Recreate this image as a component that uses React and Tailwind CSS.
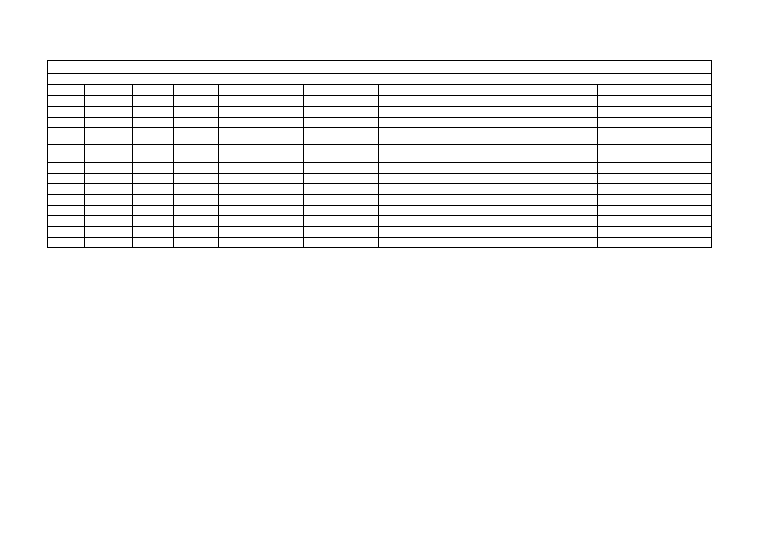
const cols = ["w-[37px]", "w-[48px]", "w-[41px]", "w-[45px]", "w-[85px]", "w-[75px]", "w-[219px]", "w-[114px]"];
const rows = [
  "h-[11px]", "h-[11px]", "h-[11px]", "h-[11px]", "h-[10px]", "h-[17px]", "h-[18px]", "h-[11px]",
  "h-[10px]", "h-[11px]", "h-[11px]", "h-[10px]", "h-[11px]", "h-[11px]", "h-[10px]",
];

export default function App() {
  return (
    <div className="min-h-[543px] w-[768px] bg-white pl-[47px] pt-[60px]">
      <table className="w-[664px] table-fixed border-collapse">
        <colgroup>
          {cols.map((w, i) => (
            <col key={i} className={w} />
          ))}
        </colgroup>
        <tbody>
          <tr>
            <td colSpan={8} className="h-[13px] border border-black p-0"></td>
          </tr>
          {rows.map((h, r) => (
            <tr key={r} className={h}>
              {r === 0 ? (
                <td colSpan={8} className="border border-black p-0"></td>
              ) : (
                cols.map((_, c) => <td key={c} className="border border-black p-0"></td>)
              )}
            </tr>
          ))}
        </tbody>
      </table>
    </div>
  );
}
